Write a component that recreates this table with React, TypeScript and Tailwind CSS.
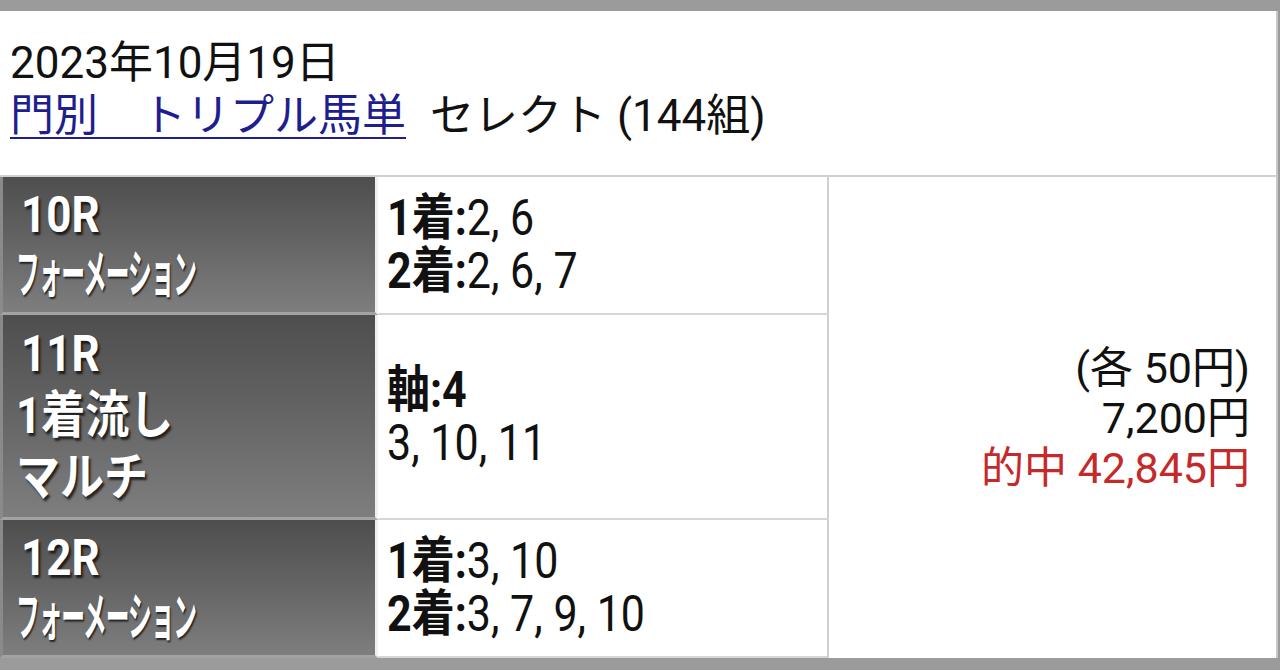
const FONT = "font-['Roboto','Noto_Sans_CJK_JP',sans-serif]";

const shadow = "[text-shadow:2px_2px_2px_rgba(0,0,0,0.7)]";
// the source screenshot is stretched vertically, so table text lines are scaled a little
const tall = "scale-y-[1.15]";

function LeftCell({ race, children, h, gap }: { race: string; children: React.ReactNode; h: string; gap: string }) {
  return (
    <div
      className={`${h} ${gap} flex flex-col justify-center pl-[13px] bg-gradient-to-b from-[#4e4e4e] via-[#656565] to-[#7e7e7e] border-l-[3px] border-l-[#8a8a8a] border-b-[3px] border-b-[#a3a3a3] border-r-[3px] border-r-[#f0f0f0] text-white font-bold text-[44px] leading-[44px] ${shadow}`}
    >
      <div className={`pl-[5px] ${tall}`}>{race}</div>
      {children}
    </div>
  );
}

function Formation() {
  return (
    <div className="whitespace-nowrap">
      <span className="inline-block origin-left scale-x-[0.54] scale-y-[1.18] tracking-[-2px]">フォーメーション</span>
    </div>
  );
}

function MidCell({ h, children }: { h: string; children: React.ReactNode }) {
  return (
    <div className={`${h} flex flex-col justify-center gap-[10px] pl-[9px] border-b-2 border-b-[#d6d6d6] border-r-2 border-r-[#d0d0d0] text-[43px] leading-[43px] text-[#111]`}>
      {children}
    </div>
  );
}

export default function App() {
  return (
    <div className={`w-[1280px] h-[670px] bg-[#9b9b9b] pt-[11px] overflow-hidden ${FONT}`}>
      {/* header */}
      <div className="h-[166px] bg-white border-r-2 border-r-[#c8c8c8] border-b-2 border-b-[#d0d0d0] pl-[10px] pt-[26px] text-[44px] leading-[53px] text-[#111] mr-[2px]">
        <div>2023年10月19日</div>
        <div className="whitespace-nowrap">
          <a className="text-[#1e1e8e] underline decoration-2 underline-offset-[6px]">門別　トリプル馬単</a>
          <span className="ml-[24px]">セレクト (144組)</span>
        </div>
      </div>

      {/* table */}
      <div className="grid grid-cols-[378px_451px_1fr] bg-white mr-[2px] border-r-2 border-r-[#c8c8c8]">
        <LeftCell race="10R" h="h-[138px]" gap="gap-[16px]">
          <Formation />
        </LeftCell>
        <MidCell h="h-[138px]">
          <div className={tall}>
            <b>1着:</b>2, 6
          </div>
          <div className={tall}>
            <b>2着:</b>2, 6, 7
          </div>
        </MidCell>
        <div className="row-span-3 flex flex-col justify-center items-end pr-[26px] text-[43px] leading-[50px] text-[#111]">
          <div>(各 50円)</div>
          <div>7,200円</div>
          <div className="text-[#c42a2a]">的中 42,845円</div>
        </div>

        <LeftCell race="11R" h="h-[205px]" gap="gap-[18px]">
          <div className={tall}>1着流し</div>
          <div className={tall}>マルチ</div>
        </LeftCell>
        <MidCell h="h-[205px]">
          <div className={tall}>
            <b>軸:4</b>
          </div>
          <div className={tall}>3, 10, 11</div>
        </MidCell>

        <LeftCell race="12R" h="h-[138px]" gap="gap-[16px]">
          <Formation />
        </LeftCell>
        <MidCell h="h-[138px]">
          <div className={tall}>
            <b>1着:</b>3, 10
          </div>
          <div className={tall}>
            <b>2着:</b>3, 7, 9, 10
          </div>
        </MidCell>
      </div>
    </div>
  );
}
